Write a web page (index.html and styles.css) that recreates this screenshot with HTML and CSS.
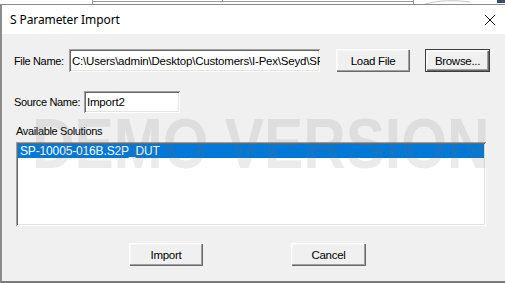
FILE: index.html
```html
<!DOCTYPE html>
<html>
<head>
<meta charset="utf-8">
<link rel="stylesheet" href="styles.css">
</head>
<body>
<div class="strip">
  <svg width="505" height="4" viewBox="0 0 505 4">
    <path d="M92.5 0 V4 M92 1.5 H414 M222.5 0 V2 M413.5 0 V4" stroke="#9a9a9a" stroke-width="1" fill="none"/>
    <path d="M425 4 C440 0 455 0 470 2" stroke="#c4c4d0" stroke-width="1" fill="none"/>
    <rect x="497" y="0" width="8" height="3" fill="#3a4a78"/>
  </svg>
</div>
<div class="dialog">
  <div class="titlebar">
    <span class="title">S Parameter Import</span>
    <span class="close">
      <svg width="12" height="12" viewBox="0 0 12 12"><path d="M1 1 L11 11 M11 1 L1 11" stroke="#1a1a1a" stroke-width="1" fill="none"/></svg>
    </span>
  </div>
  <div class="body">
    <div class="row row-file">
      <label class="lbl lbl-file">File Name:</label>
      <input class="field field-file" type="text" value="C:\Users\admin\Desktop\Customers\I-Pex\Seyd\SP-10005-016B.S2P">
      <button class="btn btn-load">Load File</button>
      <button class="btn btn-browse">Browse...</button>
    </div>
    <div class="row row-source">
      <label class="lbl lbl-source">Source Name:</label>
      <input class="field field-source" type="text" value="Import2">
    </div>
    <div class="group-label">Available Solutions</div>
    <div class="listbox">
      <div class="item selected">SP-10005-016B.S2P_DUT</div>
    </div>
    <div class="actions">
      <button class="btn btn-import">Import</button>
      <button class="btn btn-cancel">Cancel</button>
    </div>
    <div class="watermark">DEMO VERSION</div>
  </div>
</div>
</body>
</html>
```
FILE: styles.css
```css
html, body {
  margin: 0;
  padding: 0;
  background: #ffffff;
  width: 505px;
  height: 283px;
  overflow: hidden;
}
.strip {
  height: 4px;
  background: #ffffff;
  line-height: 0;
}
.strip svg { display: block; }
.dialog {
  border-top: 1px solid #8a8a8a;
  border-left: 2px solid #8c8c8c;
  border-bottom: 2px solid #7a7a7a;
  background: #f0f0f0;
  width: 503px;
}
.titlebar {
  height: 29px;
  background: #ffffff;
  display: flex;
  align-items: center;
  justify-content: space-between;
}
.title {
  font-family: "Noto Sans", "Liberation Sans", sans-serif;
  font-size: 12px;
  color: #000;
  padding-left: 8px;
  letter-spacing: -0.1px;
}
.close {
  width: 30px;
  height: 29px;
  display: flex;
  align-items: center;
  justify-content: center;
}
.body {
  position: relative;
  padding: 15px 0 15px 12px;
  font-family: "Liberation Sans", Arial, sans-serif;
  font-size: 11px;
  letter-spacing: -0.35px;
  color: #000;
}
.row {
  display: flex;
  align-items: center;
}
.row-file { height: 23px; }
.row-source { height: 22px; margin-top: 19px; }
.lbl { display: block; }
.lbl-file { width: 55px; }
.lbl-source { width: 70px; }
.field {
  box-sizing: border-box;
  border: none;
  outline: none;
  margin: 0;
  padding: 0 0 0 3px;
  background: #ffffff;
  font-family: "Liberation Sans", Arial, sans-serif;
  font-size: 11.5px;
  letter-spacing: -0.2px;
  color: #000;
  box-shadow: inset 1px 1px #a0a0a0, inset -1px -1px #ffffff, inset 2px 2px #696969, inset -2px -2px #e3e3e3;
}
.field-file { width: 251px; height: 23px; }
.field-source { width: 96px; height: 22px; }
.btn {
  box-sizing: border-box;
  height: 23px;
  margin: 0;
  padding: 0;
  border: none;
  background: #f0f0f0;
  font-family: "Liberation Sans", Arial, sans-serif;
  font-size: 11.5px;
  letter-spacing: -0.3px;
  color: #000;
  box-shadow: inset 1px 1px #ffffff, inset -1px -1px #696969, inset -2px -2px #a0a0a0, inset 2px 2px #f7f7f7;
}
.btn-load { width: 74px; margin-left: 16px; }
.btn-browse {
  width: 65px;
  margin-left: 15px;
  border: 1px solid #3c3c3c;
}
.group-label {
  margin-top: 11px;
  margin-left: 2px;
  height: 14px;
  line-height: 14px;
}
.listbox {
  box-sizing: border-box;
  margin-top: 4px;
  margin-left: 2px;
  width: 470px;
  height: 84px;
  padding: 2px;
  background: #ffffff;
  box-shadow: inset 1px 1px #a0a0a0, inset -1px -1px #ffffff, inset 2px 2px #696969, inset -2px -2px #e3e3e3;
}
.item {
  height: 14px;
  line-height: 14px;
  padding-left: 2px;
  font-size: 12px;
  letter-spacing: -0.15px;
}
.selected {
  background: #0078d7;
  color: #ffffff;
}
.actions {
  display: flex;
  margin-top: 17px;
  padding-left: 115px;
  gap: 88px;
}
.btn-import { width: 74px; }
.btn-cancel { width: 75px; }
.watermark {
  position: absolute;
  left: 30px;
  top: 75px;
  font-family: "Liberation Sans", Arial, sans-serif;
  font-weight: bold;
  font-size: 70px;
  line-height: 1;
  letter-spacing: 0;
  white-space: nowrap;
  color: rgba(110, 110, 110, 0.14);
  transform: scaleX(0.84);
  transform-origin: left top;
  pointer-events: none;
}
```
